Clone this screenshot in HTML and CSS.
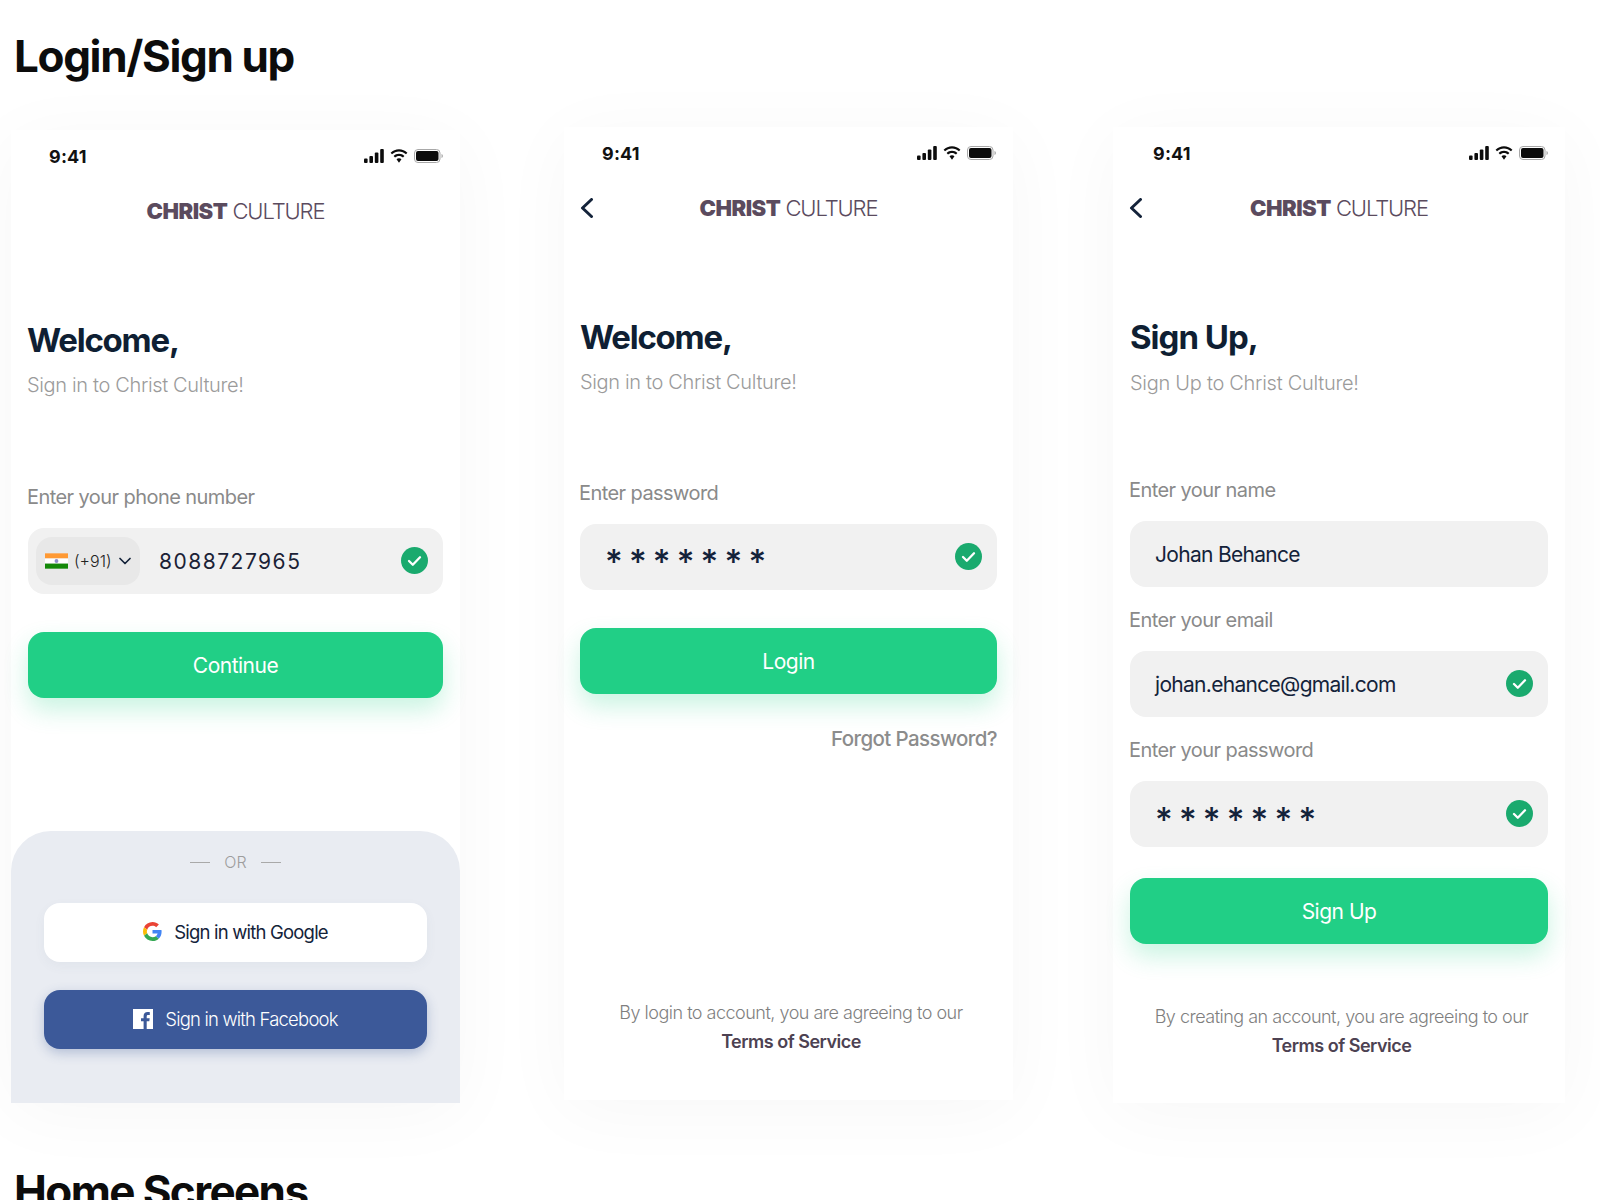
FILE: index.html
```html
<!DOCTYPE html>
<html lang="en">
  <head>
    <meta charset="UTF-8" />
    <meta name="viewport" content="width=device-width, initial-scale=1.0" />
    <title>Login/Sign up</title>
    <link rel="stylesheet" href="styles.css">
  </head>
  <body>
    <svg class="sprites" width="0" height="0">
      <symbol id="signal" viewBox="0 0 20 14">
        <rect x="0" y="9.5" width="3.6" height="4.5" rx="1" />
        <rect x="5.4" y="7" width="3.6" height="7" rx="1" />
        <rect x="10.8" y="3.5" width="3.6" height="10.5" rx="1" />
        <rect x="16.2" y="0" width="3.6" height="14" rx="1" />
      </symbol>
      <symbol id="wifi" viewBox="1 0.5 16 13">
        <path d="M9 2.8c2.5 0 4.800 1 6.500 2.600l1.300-1.400C14.700 2 12 .8 9 .8S3.300 2 1.200 4l1.300 1.400C4.200 3.800 6.500 2.800 9 2.800z" />
        <path d="M9 7c1.400 0 2.700.5 3.700 1.500l1.300-1.400C12.700 5.800 11 5 9 5s-3.700.8-5 2.100l1.300 1.400C6.300 7.500 7.600 7 9 7z" />
        <path d="M9 9.200c-.9 0-1.700.4-2.300.9L9 13.200l2.300-3.100c-.6-.5-1.400-.9-2.300-.9z" />
      </symbol>
      <symbol id="battery" viewBox="0 0 29 14">
        <rect x=".5" y=".5" width="25.500" height="13" rx="3.500" fill="none" stroke="#a8a8a8" />
        <rect x="2" y="2" width="22.500" height="10" rx="2" />
        <path d="M27.500 5v4c.8-.3 1.400-1.100 1.400-2s-.6-1.700-1.400-2z" fill="#a8a8a8" />
      </symbol>
      <symbol id="check" viewBox="0 0 27 27">
        <circle cx="13.500" cy="13.500" r="13.500" fill="#1aaa6e" />
        <path d="M8 14l3.800 3.700L19 10.300" fill="none" stroke="#fff" stroke-width="2.300" stroke-linecap="round" stroke-linejoin="round" />
      </symbol>
      <symbol id="back" viewBox="0 0 14 20">
        <path d="M11.500 1.500L2.500 10l9 8.500" fill="none" stroke="#14233a" stroke-width="3" stroke-linecap="round" stroke-linejoin="round" />
      </symbol>
    </svg>

    <h1 class="section-title">Login/Sign up</h1>

    <div class="screens">
      <div class="phone phone-phone">
        <div class="status-bar">
          <span class="time">9:41</span>
          <div class="status-icons">
            <svg class="icon-signal"><use href="#signal" /></svg>
            <svg class="icon-wifi"><use href="#wifi" /></svg>
            <svg class="icon-battery"><use href="#battery" /></svg>
          </div>
        </div>
        <div class="nav">
          <span></span>
          <div class="logo"><b>CHRIST</b> CULTURE</div>
          <span></span>
        </div>
        <div class="content">
          <h2>Welcome,</h2>
          <p class="sub">Sign in to Christ Culture!</p>
          <label class="label">Enter your phone number</label>
          <div class="field field-phone">
            <div class="country">
              <svg class="flag" viewBox="0 0 24 16">
                <rect width="24" height="5.400" fill="#ff9933" />
                <rect y="5.400" width="24" height="5.300" fill="#fff" />
                <rect y="10.700" width="24" height="5.300" fill="#138808" />
                <circle cx="12" cy="8" r="2" fill="#8e8ec9" />
              </svg>
              <span>(+91)</span>
              <svg class="chevron" viewBox="0 0 12 8">
                <path d="M1 1.500l5 5 5-5" fill="none" stroke="#14233a" stroke-width="1.700" stroke-linecap="round" stroke-linejoin="round" />
              </svg>
            </div>
            <span class="number">8088727965</span>
            <svg class="check"><use href="#check" /></svg>
          </div>
          <button class="btn-primary">Continue</button>
        </div>
        <div class="social">
          <div class="or"><i></i><span>OR</span><i></i></div>
          <button class="btn-social btn-google">
            <svg class="social-icon" viewBox="0 0 48 48">
              <path fill="#ea4335" d="M24 9.500c3.500 0 6.700 1.200 9.200 3.600l6.900-6.900C35.900 2.400 30.500 0 24 0 14.600 0 6.500 5.400 2.600 13.200l8 6.200C12.500 13.600 17.800 9.500 24 9.500z" />
              <path fill="#4285f4" d="M47 24.500c0-1.600-.1-3.100-.4-4.500H24v9h12.900c-.6 3-2.200 5.400-4.700 7.100l7.700 6C44.400 37.900 47 31.800 47 24.500z" />
              <path fill="#fbbc05" d="M10.500 28.600c-.5-1.400-.8-3-.8-4.600s.3-3.200.8-4.600l-8-6.200C.9 16.500 0 20.100 0 24s.9 7.500 2.600 10.800l7.900-6.200z" />
              <path fill="#34a853" d="M24 48c6.500 0 11.900-2.100 15.900-5.800l-7.700-6c-2.200 1.400-4.900 2.300-8.200 2.300-6.200 0-11.500-4.200-13.400-9.900l-8 6.200C6.500 42.600 14.600 48 24 48z" />
            </svg>
            <span>Sign in with Google</span>
          </button>
          <button class="btn-social btn-facebook">
            <svg class="social-icon-fb" viewBox="0 0 20 20">
              <path fill="#fff" d="M0 0h20v20h-6.300v-7.700h2.600l.4-3h-3V7.400c0-.9.200-1.500 1.500-1.500h1.600V3.200c-.3 0-1.200-.1-2.300-.1-2.300 0-3.900 1.400-3.900 4v2.200H8v3h2.600V20H0z" />
            </svg>
            <span>Sign in with Facebook</span>
          </button>
        </div>
      </div>

      <div class="phone phone-login">
        <div class="status-bar">
          <span class="time">9:41</span>
          <div class="status-icons">
            <svg class="icon-signal"><use href="#signal" /></svg>
            <svg class="icon-wifi"><use href="#wifi" /></svg>
            <svg class="icon-battery"><use href="#battery" /></svg>
          </div>
        </div>
        <div class="nav">
          <svg class="back"><use href="#back" /></svg>
          <div class="logo"><b>CHRIST</b> CULTURE</div>
          <span></span>
        </div>
        <div class="content">
          <h2>Welcome,</h2>
          <p class="sub">Sign in to Christ Culture!</p>
          <label class="label">Enter password</label>
          <div class="field">
            <span class="stars">*******</span>
            <svg class="check"><use href="#check" /></svg>
          </div>
          <button class="btn-primary">Login</button>
          <a class="forgot">Forgot Password?</a>
        </div>
        <p class="terms">By login to account, you are agreeing to our<br /><b>Terms of Service</b></p>
      </div>

      <div class="phone phone-signup">
        <div class="status-bar">
          <span class="time">9:41</span>
          <div class="status-icons">
            <svg class="icon-signal"><use href="#signal" /></svg>
            <svg class="icon-wifi"><use href="#wifi" /></svg>
            <svg class="icon-battery"><use href="#battery" /></svg>
          </div>
        </div>
        <div class="nav">
          <svg class="back"><use href="#back" /></svg>
          <div class="logo"><b>CHRIST</b> CULTURE</div>
          <span></span>
        </div>
        <div class="content">
          <h2>Sign Up,</h2>
          <p class="sub">Sign Up to Christ Culture!</p>
          <label class="label">Enter your name</label>
          <div class="field"><span class="value">Johan Behance</span></div>
          <label class="label label-tight">Enter your email</label>
          <div class="field">
            <span class="value">johan.ehance@gmail.com</span>
            <svg class="check"><use href="#check" /></svg>
          </div>
          <label class="label label-tight">Enter your password</label>
          <div class="field">
            <span class="stars">*******</span>
            <svg class="check"><use href="#check" /></svg>
          </div>
          <button class="btn-primary btn-signup">Sign Up</button>
        </div>
        <p class="terms">By creating an account, you are agreeing to our<br /><b>Terms of Service</b></p>
      </div>
    </div>

    <h1 class="section-title section-title-next">Home Screens</h1>
  </body>
</html>
```

FILE: styles.css
```css
* {
  margin: 0;
  padding: 0;
  box-sizing: border-box;
}
html,
body {
  height: 1200px;
  overflow: hidden;
}
body {
  font-family: Inter, "Liberation Sans", sans-serif;
  background: #fff;
  color: #14233a;
}
.sprites {
  position: absolute;
}
.section-title {
  font-size: 44px;
  line-height: 54px;
  font-weight: 700;
  letter-spacing: -1.35px;
  color: #0c0c0c;
  padding: 29px 0 0 14px;
}
.section-title-next {
  padding-top: 0;
  margin-top: 61px;
  letter-spacing: -1.6px;
}
.screens {
  display: flex;
  align-items: flex-start;
  margin-top: 44px;
  padding-left: 11px;
}
.phone {
  display: flex;
  flex-direction: column;
  width: 449px;
  height: 973px;
  background: #fff;
  box-shadow: 0 10px 70px rgba(0, 0, 0, 0.035);
}
.phone-phone {
  margin-top: 3px;
}
.phone-login {
  margin-left: 104px;
}
.phone-signup {
  width: 452px;
  height: 976px;
  margin-left: 100px;
}

/* status bar */
.status-bar {
  display: flex;
  justify-content: space-between;
  align-items: center;
  height: 52px;
  padding: 0 17px 0 38px;
}
.phone-signup .status-bar {
  padding-left: 40px;
}
.time {
  font-size: 18px;
  font-weight: 700;
  letter-spacing: 0.2px;
  color: #111;
}
.status-icons {
  display: flex;
  align-items: center;
  gap: 6px;
  fill: #0c0c0c;
}
.icon-signal {
  width: 20px;
  height: 14px;
}
.icon-wifi {
  width: 18px;
  height: 14px;
}
.icon-battery {
  width: 29px;
  height: 14px;
}

/* logo row */
.nav {
  display: grid;
  grid-template-columns: 1fr auto 1fr;
  align-items: center;
  height: 58px;
  padding: 0 17px;
}
.logo {
  font-size: 22px;
  font-weight: 300;
  letter-spacing: -1.1px;
  color: #5b4b5e;
}
.logo b {
  font-weight: 900;
  letter-spacing: -0.5px;
}
.back {
  width: 14px;
  height: 20px;
  margin-left: -1.5px;
}

.content {
  padding: 0 17px;
}
.phone-login .content {
  padding: 0 16px;
}
.phone-phone h2,
.phone-phone .sub {
  margin-left: -1px;
}
h2 {
  font-size: 33px;
  line-height: 40px;
  font-weight: 700;
  letter-spacing: -1.25px;
  color: #0f1f33;
  margin-top: 80px;
}
.phone-signup h2 {
  letter-spacing: -1px;
}
.sub {
  font-size: 20px;
  line-height: 28px;
  letter-spacing: -0.35px;
  font-weight: 300;
  color: #9b9b9b;
  margin-top: 11px;
}
.phone-signup .sub {
  margin-top: 12px;
  letter-spacing: -0.28px;
}
.label {
  display: block;
  font-size: 20px;
  line-height: 28px;
  letter-spacing: -0.57px;
  color: #8a8a8a;
  margin-top: 84px;
  margin-bottom: 17px;
  margin-left: -1px;
}
.phone-login .label {
  margin-top: 83px;
}
.phone-signup .label {
  margin-top: 79px;
}
.phone-signup .label-tight {
  margin-top: 19.5px;
}
.field {
  display: flex;
  align-items: center;
  height: 65.5px;
  padding: 0 15px 0 25px;
  border-radius: 16px;
  background: #f1f1f1;
}
.field-phone {
  padding-left: 8px;
}
.country {
  display: flex;
  align-items: center;
  width: 104px;
  height: 48px;
  padding-left: 9px;
  border-radius: 16px;
  background: #e8e8e8;
  font-size: 16px;
  font-weight: 300;
  color: #222;
}
.flag {
  width: 23px;
  height: 16px;
  margin-right: 6px;
}
.chevron {
  width: 12px;
  height: 8px;
  margin-left: 7px;
}
.number {
  font-size: 21px;
  letter-spacing: 1.5px;
  margin-left: 19px;
  padding-top: 1px;
  color: #1b2236;
}
.value {
  font-size: 21px;
  letter-spacing: -0.7px;
  padding-top: 2px;
  color: #14233a;
}
.stars {
  font-size: 34px;
  line-height: 34px;
  font-weight: 500;
  letter-spacing: 6.2px;
  color: #14233a;
  padding-top: 10px;
}
.phone-signup .stars {
  padding-top: 13px;
}
.check {
  width: 27px;
  height: 27px;
  margin-left: auto;
}
.btn-primary {
  display: block;
  width: 100%;
  height: 66px;
  margin-top: 38.5px;
  border: 0;
  border-radius: 16px;
  background: #21cf86;
  color: #fff;
  font-family: inherit;
  font-size: 21px;
  letter-spacing: -0.5px;
  box-shadow: 0 12px 24px rgba(33, 207, 134, 0.24);
}
.btn-signup {
  margin-top: 31.5px;
}
.forgot {
  display: block;
  text-align: right;
  font-size: 20.5px;
  line-height: 28px;
  letter-spacing: -0.6px;
  font-weight: 500;
  color: #8c8c8c;
  margin-top: 31px;
}

/* sign in options */
.social {
  margin-top: auto;
  height: 272px;
  padding: 0 33px;
  border-radius: 40px 40px 0 0;
  background: #e9ecf2;
}
.or {
  display: flex;
  justify-content: center;
  align-items: center;
  gap: 14px;
  height: 62px;
  font-size: 16px;
  font-weight: 300;
  color: #9d9d9d;
}
.or i {
  width: 20px;
  height: 1px;
  background: #a9a9a9;
}
.btn-social {
  display: flex;
  justify-content: center;
  align-items: center;
  width: 100%;
  height: 59px;
  padding-bottom: 2px;
  border: 0;
  border-radius: 16px;
  font-family: inherit;
  font-size: 18.5px;
  letter-spacing: -0.8px;
}
.btn-google {
  gap: 12px;
  margin-top: 10px;
  background: #fff;
  color: #14233a;
  box-shadow: 0 4px 12px rgba(80, 90, 120, 0.05);
}
.btn-facebook {
  gap: 12px;
  margin-top: 28px;
  background: #3c5999;
  color: #fff;
  font-weight: 300;
  box-shadow: 0 4px 12px rgba(60, 89, 153, 0.3);
}
.social-icon {
  width: 19px;
  height: 19px;
}
.social-icon-fb {
  width: 20px;
  height: 20px;
}
.terms {
  margin-top: auto;
  padding: 0 0 44px 5px;
  text-align: center;
  font-size: 18px;
  line-height: 28.5px;
  letter-spacing: -0.5px;
  font-weight: 300;
  color: #7f7f7f;
}
.phone-signup .terms {
  padding-bottom: 43px;
}
.terms b {
  font-weight: 600;
  color: #4d4252;
}
```
